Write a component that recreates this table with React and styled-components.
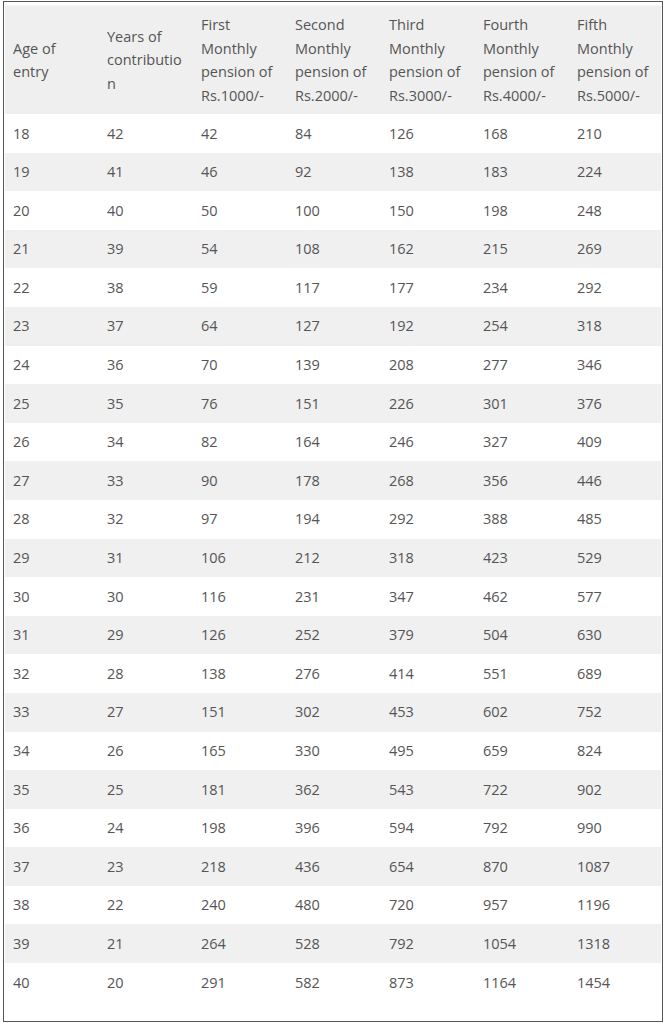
import React from "react";
import styled, { createGlobalStyle } from "styled-components";

const GlobalStyle = createGlobalStyle`
  body {
    margin: 0;
    background: #ffffff;
    font-family: "Open Sans", "Noto Sans", sans-serif;
  }
`;

const Frame = styled.div`
  box-sizing: border-box;
  margin: 1px 0 0 3px;
  width: 660px;
  height: 1021px;
  padding: 3px 2px 19px 1px;
  border: 1px solid #555555;
  background: #ffffff;
`;

const Table = styled.table`
  width: 656px;
  border-collapse: collapse;
  table-layout: fixed;
  color: #555555;
  font-size: 14.5px;
`;

const HeadRow = styled.tr`
  background: #efefef;
`;

const HeadCell = styled.th`
  padding: 7px 8px 7px 8px;
  text-align: left;
  font-weight: 400;
  line-height: 23.5px;
  vertical-align: middle;
  overflow-wrap: anywhere;
  border-top: 1px solid #f7f7f7;
`;

const Row = styled.tr`
  background: ${(p) => (p.$striped ? "#f0f0f0" : "#ffffff")};
`;

const Cell = styled.td`
  padding: 7.5px 8px;
  line-height: 23.6px;
  white-space: nowrap;
`;

const headers = [
  "Age of entry",
  "Years of contribution",
  "First Monthly pension of Rs.1000/-",
  "Second Monthly pension of Rs.2000/-",
  "Third Monthly pension of Rs.3000/-",
  "Fourth Monthly pension of Rs.4000/-",
  "Fifth Monthly pension of Rs.5000/-",
];

const widths = [94, 94, 94, 94, 94, 94, 92];

const rows = [
  [18, 42, 42, 84, 126, 168, 210],
  [19, 41, 46, 92, 138, 183, 224],
  [20, 40, 50, 100, 150, 198, 248],
  [21, 39, 54, 108, 162, 215, 269],
  [22, 38, 59, 117, 177, 234, 292],
  [23, 37, 64, 127, 192, 254, 318],
  [24, 36, 70, 139, 208, 277, 346],
  [25, 35, 76, 151, 226, 301, 376],
  [26, 34, 82, 164, 246, 327, 409],
  [27, 33, 90, 178, 268, 356, 446],
  [28, 32, 97, 194, 292, 388, 485],
  [29, 31, 106, 212, 318, 423, 529],
  [30, 30, 116, 231, 347, 462, 577],
  [31, 29, 126, 252, 379, 504, 630],
  [32, 28, 138, 276, 414, 551, 689],
  [33, 27, 151, 302, 453, 602, 752],
  [34, 26, 165, 330, 495, 659, 824],
  [35, 25, 181, 362, 543, 722, 902],
  [36, 24, 198, 396, 594, 792, 990],
  [37, 23, 218, 436, 654, 870, 1087],
  [38, 22, 240, 480, 720, 957, 1196],
  [39, 21, 264, 528, 792, 1054, 1318],
  [40, 20, 291, 582, 873, 1164, 1454],
];

export default function App() {
  return (
    <>
      <GlobalStyle />
      <Frame>
        <Table>
          <colgroup>
            {widths.map((w, i) => (
              <col key={i} style={{ width: w }} />
            ))}
          </colgroup>
          <thead>
            <HeadRow>
              {headers.map((h) => (
                <HeadCell key={h}>{h}</HeadCell>
              ))}
            </HeadRow>
          </thead>
          <tbody>
            {rows.map((r, i) => (
              <Row key={r[0]} $striped={i % 2 === 1}>
                {r.map((v, j) => (
                  <Cell key={j}>{v}</Cell>
                ))}
              </Row>
            ))}
          </tbody>
        </Table>
      </Frame>
    </>
  );
}
